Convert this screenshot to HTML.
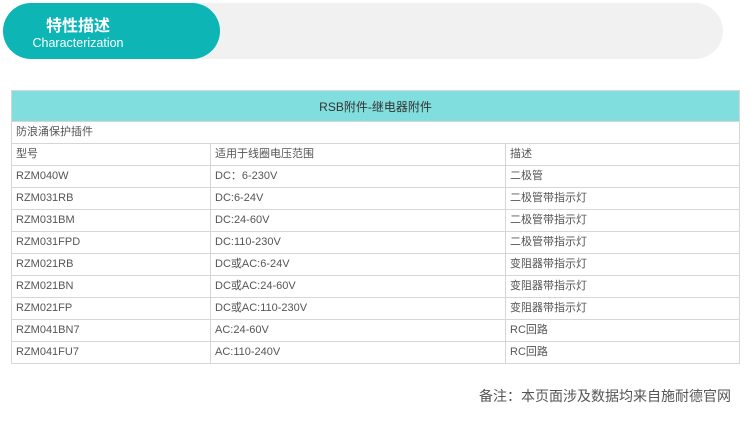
<!DOCTYPE html>
<html><head><meta charset="utf-8"><style>
body{margin:0;width:750px;height:422px;background:#fff;font-family:"Liberation Sans","Noto Sans CJK SC",sans-serif;position:relative;overflow:hidden}
.bar{position:absolute;left:4px;top:3px;width:719px;height:56px;border-radius:28px;background:#f1f1f1}
.pill{position:absolute;left:3px;top:3px;width:217px;height:56px;border-radius:28px;background:#0db5b5;color:#fff;text-align:center}
.pill .t1{position:absolute;left:0;width:150px;top:15px;font-size:16px;font-weight:bold;line-height:18px}
.pill .t2{position:absolute;left:0;width:150px;top:33px;font-size:12.5px;line-height:15px}
table{position:absolute;left:11px;top:90px;width:729px;border-collapse:collapse;font-size:11px;color:#555}
td{border:1px solid #d6d6d6;height:21px;padding:0 0 0 4px;line-height:21px}
th{background:#80dede;height:28px;font-weight:normal;color:#333;font-size:12px;border:1px solid #d6d6d6}
.note{position:absolute;right:19px;top:386px;font-size:14px;color:#555}
</style></head><body>
<div class="bar"></div>
<div class="pill"><div class="t1">特性描述</div><div class="t2">Characterization</div></div>
<table>
<tr><th colspan="3">RSB附件-继电器附件</th></tr>
<tr><td colspan="3">防浪涌保护插件</td></tr>
<tr><td style="width:194px">型号</td><td style="width:290px">适用于线圈电压范围</td><td>描述</td></tr>
<tr><td>RZM040W</td><td>DC：6-230V</td><td>二极管</td></tr>
<tr><td>RZM031RB</td><td>DC:6-24V</td><td>二极管带指示灯</td></tr>
<tr><td>RZM031BM</td><td>DC:24-60V</td><td>二极管带指示灯</td></tr>
<tr><td>RZM031FPD</td><td>DC:110-230V</td><td>二极管带指示灯</td></tr>
<tr><td>RZM021RB</td><td>DC或AC:6-24V</td><td>变阻器带指示灯</td></tr>
<tr><td>RZM021BN</td><td>DC或AC:24-60V</td><td>变阻器带指示灯</td></tr>
<tr><td>RZM021FP</td><td>DC或AC:110-230V</td><td>变阻器带指示灯</td></tr>
<tr><td>RZM041BN7</td><td>AC:24-60V</td><td>RC回路</td></tr>
<tr><td>RZM041FU7</td><td>AC:110-240V</td><td>RC回路</td></tr>
</table>
<div class="note">备注：本页面涉及数据均来自施耐德官网</div>
</body></html>
